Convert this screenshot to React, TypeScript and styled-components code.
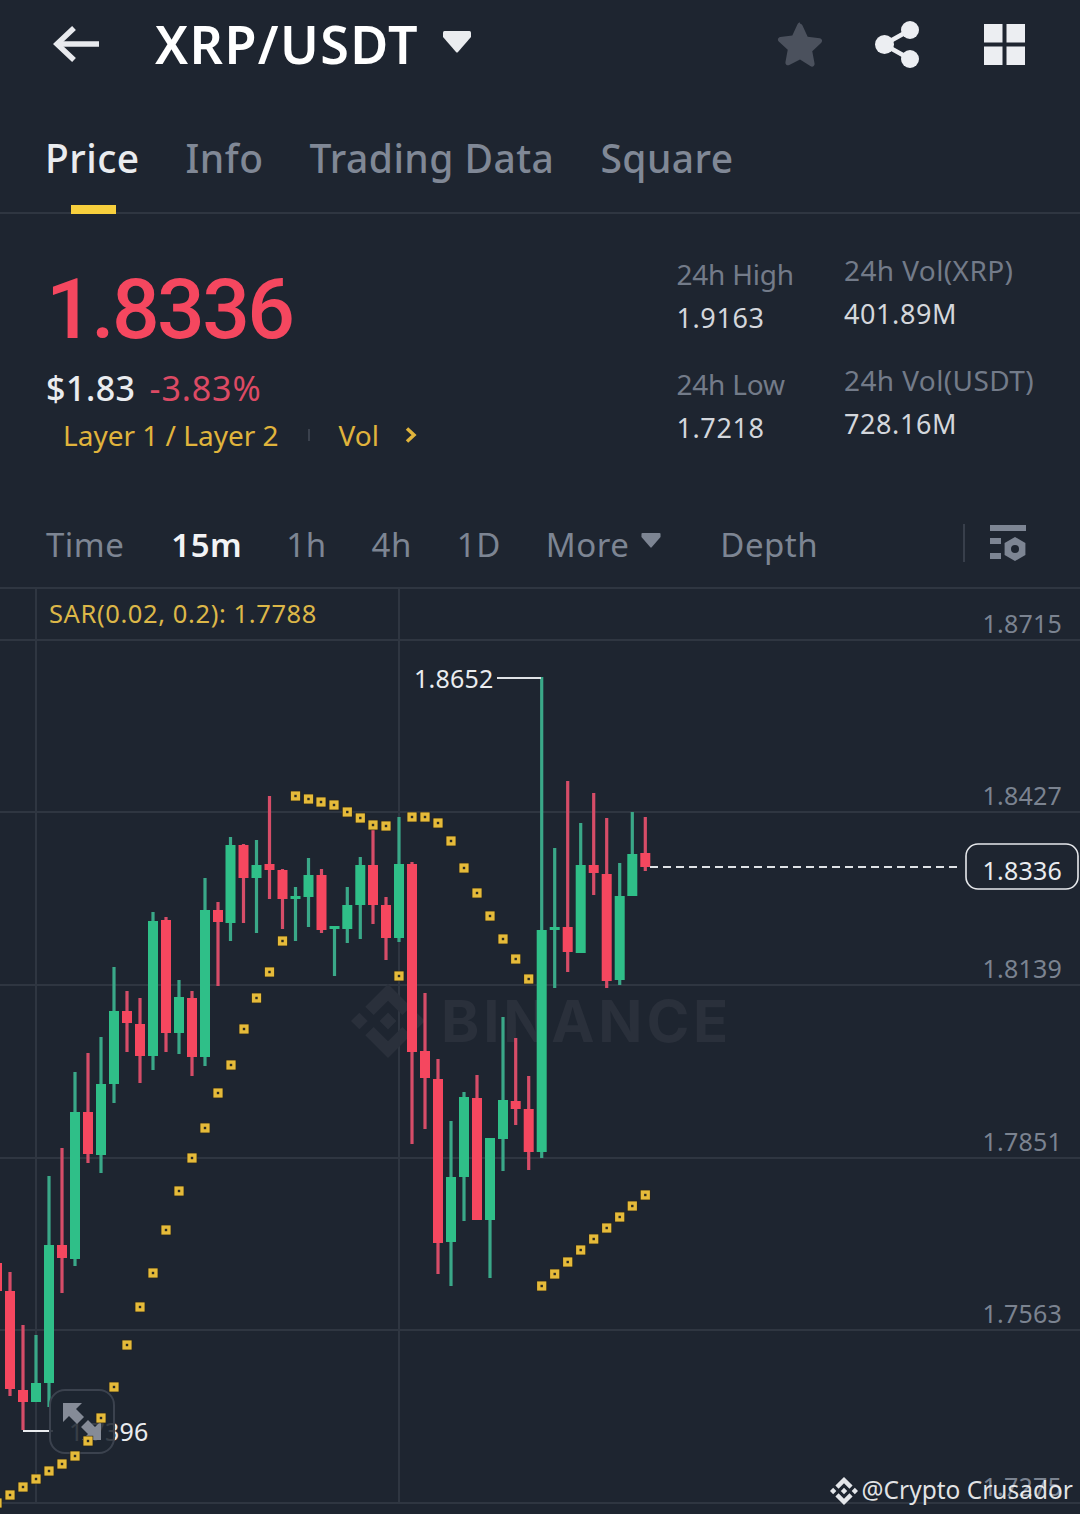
import styled, { createGlobalStyle } from "styled-components";

const GlobalStyle = createGlobalStyle`
    html, body {
        margin: 0;
        padding: 0;
        background: #1e2530;
    }
`;

const FONT = `"Noto Sans", "Open Sans", sans-serif`;
const GREEN = "#2fbf88";
const GREEN_WICK = "#3aa888";
const RED = "#f5475f";
const RED_WICK = "#d64d68";
const SAR_YELLOW = "#e6bb3a";
const GRID = "#2f3641";
const AXIS_TEXT = "#7b8390";

const Page = styled.div`
    position: relative;
    width: 1080px;
    height: 1514px;
    overflow: hidden;
    background: #1e2530;
    font-family: ${FONT};
    display: flex;
    flex-direction: column;
`;

const Header = styled.header`
    height: 88px;
    display: flex;
    align-items: center;
    padding: 0 53px;
    flex: none;
`;

const TitleButton = styled.div`
    display: flex;
    align-items: center;
    margin-left: 56px;
    color: #fff;
    font-size: 52px;
    font-weight: 600;
    line-height: 1;
    letter-spacing: 1.4px;
    svg {
        margin: -4px 0 0 24px;
    }
`;

const HeaderIcons = styled.div`
    display: flex;
    align-items: center;
    gap: 52px;
    margin-left: auto;
    margin-right: 2px;
    svg:last-child {
        margin-left: 13px;
    }
`;

const Tabs = styled.nav`
    flex: none;
    height: 124px;
    display: flex;
    gap: 46px;
    padding-left: 45px;
    border-bottom: 2px solid ${GRID};
`;

const Tab = styled.div<{ $active?: boolean }>`
    position: relative;
    padding-top: 43px;
    font-size: 39px;
    line-height: 54px;
    font-weight: 500;
    letter-spacing: 0.45px;
    color: ${(p) => (p.$active ? "#eaecef" : "#808896")};
    ${(p) =>
        p.$active &&
        `&::after {
            content: "";
            position: absolute;
            left: 26px;
            bottom: -2px;
            width: 45px;
            height: 9px;
            background: #f7cf3d;
        }`}
`;

const Stats = styled.section`
    flex: none;
    height: 284px;
    display: flex;
    justify-content: space-between;
    padding-right: 46px;
`;

const PriceBlock = styled.div`
    padding: 48px 0 0 46px;
`;

const BigPrice = styled.div`
    font-family: Roboto, ${FONT};
    font-size: 84px;
    font-weight: 500;
    line-height: 96px;
    letter-spacing: -2.6px;
    color: ${RED};
`;

const SubPrice = styled.div`
    display: flex;
    gap: 14px;
    margin-top: 8px;
    font-size: 34px;
    line-height: 44px;
    font-weight: 500;
    letter-spacing: 0.5px;
    color: #eaecef;
    span + span {
        font-weight: 400;
        letter-spacing: 0.9px;
        color: #dc4a64;
    }
`;

const TagRow = styled.div`
    display: flex;
    align-items: center;
    margin: 4px 0 0 17px;
    font-size: 28px;
    line-height: 42px;
    color: #e0b43c;
`;

const TagDivider = styled.i`
    width: 2px;
    height: 12px;
    margin: 0 29px;
    background: #3a414d;
`;

const TagChevron = styled.svg`
    margin-left: 26px;
`;

const StatColumns = styled.div`
    display: flex;
    gap: 50px;
`;

const StatColumn = styled.div<{ $top: number; $tracking: number }>`
    padding-top: ${(p) => p.$top}px;
    display: flex;
    flex-direction: column;
    gap: 24px;
    letter-spacing: ${(p) => p.$tracking}px;
`;

const StatItem = styled.div`
    font-size: 28px;
    line-height: 43px;
    color: #737b89;
    b {
        display: block;
        font-size: 27px;
        font-weight: 400;
        color: #d4d7dc;
        letter-spacing: 0.6px;
    }
`;

const Toolbar = styled.div`
    flex: none;
    height: 85px;
    display: flex;
    align-items: center;
    padding: 4px 54px 0 46px;
    border-bottom: 2px solid ${GRID};
`;

const Interval = styled.div<{ $active?: boolean; $left: number }>`
    margin-left: ${(p) => p.$left}px;
    font-size: 33px;
    line-height: 44px;
    letter-spacing: 0.5px;
    font-weight: ${(p) => (p.$active ? 600 : 400)};
    color: ${(p) => (p.$active ? "#f2f3f5" : "#7d8593")};
    display: flex;
    align-items: center;
    svg {
        margin: -8px 0 0 12px;
    }
`;

const ToolbarRight = styled.div`
    margin-left: auto;
    display: flex;
    align-items: center;
    margin-top: -4px;
`;

const ToolbarDivider = styled.i`
    width: 2px;
    height: 38px;
    margin-right: 25px;
    background: #383f4b;
`;

const Chart = styled.div`
    flex: 1;
    min-height: 0;
    svg {
        display: block;
    }
`;

const Credit = styled.div`
    position: absolute;
    right: 7px;
    bottom: 6px;
    display: flex;
    align-items: center;
    gap: 4px;
    font-size: 24.5px;
    line-height: 36px;
    color: rgba(255, 255, 255, 0.88);
    svg {
        margin-top: 1px;
    }
`;

// x center, wick top, wick bottom, body top, body bottom
type Candle = [number, number, number, number, number, "g" | "r"];

const candles: Candle[] = [
    [-3, 1255, 1300, 1263, 1291, "r"],
    [10, 1272, 1396, 1291, 1389, "r"],
    [23, 1325, 1430, 1390, 1402, "r"],
    [36, 1335, 1402, 1383, 1402, "g"],
    [49, 1176, 1407, 1245, 1383, "g"],
    [62, 1148, 1293, 1245, 1258, "r"],
    [75, 1072, 1266, 1112, 1259, "g"],
    [88, 1053, 1163, 1112, 1154, "r"],
    [101, 1037, 1173, 1084, 1155, "g"],
    [114, 967, 1103, 1011, 1084, "g"],
    [127, 991, 1052, 1011, 1023, "r"],
    [140, 998, 1083, 1024, 1056, "r"],
    [153, 912, 1070, 921, 1056, "g"],
    [166, 917, 1052, 920, 1033, "r"],
    [179, 980, 1054, 997, 1033, "g"],
    [192, 991, 1076, 998, 1057, "r"],
    [205, 878, 1066, 910, 1057, "g"],
    [218, 902, 986, 910, 922, "r"],
    [230.5, 837, 941, 845, 923, "g"],
    [243.5, 844, 923, 845, 878, "r"],
    [256.5, 840, 933, 865, 878, "g"],
    [269.5, 796, 899, 864, 870, "r"],
    [282.5, 869, 929, 870, 899, "r"],
    [295.5, 887, 941, 896, 899, "g"],
    [308.5, 858, 927, 875, 897, "g"],
    [321.5, 869, 933, 875, 930, "r"],
    [334.5, 926, 976, 926, 929, "g"],
    [347.3, 887, 943, 905, 929, "g"],
    [360.3, 857, 939, 865, 905, "g"],
    [373, 827, 924, 865, 905, "r"],
    [386, 897, 960, 905, 938, "r"],
    [399, 817, 942, 864, 938, "g"],
    [412, 862, 1144, 864, 1052, "r"],
    [425, 993, 1129, 1051, 1078, "r"],
    [438, 1059, 1274, 1079, 1243, "r"],
    [451, 1121, 1286, 1177, 1242, "g"],
    [464, 1092, 1221, 1097, 1177, "g"],
    [477, 1075, 1220, 1098, 1220, "r"],
    [490, 1138, 1278, 1138, 1220, "g"],
    [503, 1017, 1171, 1100, 1139, "g"],
    [515.7, 1038, 1125, 1101, 1109, "r"],
    [528.7, 1076, 1170, 1109, 1152, "r"],
    [541.7, 677, 1158, 930, 1152, "g"],
    [554.7, 848, 988, 927, 930, "g"],
    [567.7, 781, 972, 927, 952, "r"],
    [580.7, 823, 953, 865, 953, "g"],
    [593.7, 793, 895, 865, 873, "r"],
    [606.7, 818, 988, 874, 981, "r"],
    [619.7, 863, 985, 896, 980, "g"],
    [632.3, 812, 896, 854, 896, "g"],
    [645.3, 817, 871, 853, 867, "r"],
];

const sarDots: [number, number][] = [
    [-3, 1503], [10, 1495], [23, 1487], [36, 1479], [49, 1471], [62, 1464], [75, 1456],
    [88, 1441], [101, 1418], [114, 1387], [127, 1345], [140, 1307], [153, 1273], [166, 1230],
    [179, 1191], [192, 1158], [205, 1128], [218, 1093], [231, 1065], [244, 1029], [256.5, 998],
    [269.5, 972], [282.5, 941], [295.5, 796], [308.5, 799], [321, 802], [334, 805], [347.3, 812],
    [360.3, 818], [373, 825], [386, 826], [399, 976], [412, 817], [425, 817], [438, 823],
    [451, 841], [464, 868], [477, 893], [490, 916], [503, 939], [515.7, 959], [528.7, 979],
    [541.7, 1286], [554.7, 1274], [567.7, 1262], [580.7, 1250], [593.7, 1239], [606.7, 1228],
    [619.7, 1217], [632.3, 1206], [645.3, 1195],
];

const gridRows = [640, 812, 985, 1158, 1330, 1503];
const axisLabels: [string, number][] = [
    ["1.8715", 633], ["1.8427", 805], ["1.8139", 978], ["1.7851", 1151], ["1.7563", 1323], ["1.7275", 1496],
];

const BinanceMark = ({ fill, size, x, y }: { fill: string; size: number; x?: number; y?: number }) => (
    <svg x={x} y={y} width={size} height={size} viewBox="0 0 126.61 126.61" fill={fill}>
        <path d="M38.73 53.2l24.59-24.58 24.6 24.6 14.3-14.31L63.32 0 24.42 38.9l14.31 14.3z" />
        <path d="M0 63.31l14.3-14.31 14.31 14.31-14.31 14.3z" />
        <path d="M38.73 73.41l24.59 24.59 24.6-24.6 14.31 14.29-38.9 38.91-38.91-38.88-.02-.02 14.33-14.29z" />
        <path d="M98 63.31l14.3-14.31 14.31 14.3-14.31 14.32z" />
        <path d="M77.83 63.3L63.32 48.78 52.59 59.51l-1.24 1.23-2.54 2.54 14.51 14.5 14.51-14.47z" />
    </svg>
);

const Caret = ({ width, height, fill }: { width: number; height: number; fill: string }) => (
    <svg width={width} height={height} viewBox="0 0 28 22" fill={fill}>
        <path d="M0 1.5Q0 0 1.5 0H26.5Q28 0 28 1.5V6L15 21Q14 22 13 21L0 6Z" />
    </svg>
);

const CandleChart = () => (
    <svg width="1080" height="925" viewBox="0 589 1080 925" fontFamily={FONT}>
        {gridRows.map((y) => (
            <rect key={y} x="0" y={y - 1} width="1080" height="2" fill={GRID} />
        ))}
        <rect x="35" y="589" width="2" height="914" fill={GRID} />
        <rect x="398" y="589" width="2" height="914" fill={GRID} />

        <BinanceMark fill="#2a303b" size={74} x={351} y={984} />
        <text x="441" y="1042" fontSize="58" fontWeight="700" letterSpacing="3.8" fontFamily="Inter, sans-serif" fill="#2a303b">
            BINANCE
        </text>

        <text x="49" y="623" fontSize="25.5" letterSpacing="0.6" fill="#dcb748">SAR(0.02, 0.2): 1.7788</text>

        {axisLabels.map(([label, y]) => (
            <text key={label} x="1062" y={y} fontSize="25" letterSpacing="0.2" textAnchor="end" fill={AXIS_TEXT}>
                {label}
            </text>
        ))}

        {candles.map(([x, wickTop, wickBottom, bodyTop, bodyBottom, side]) => (
            <g key={x}>
                <rect x={x - 1.6} y={wickTop} width="3.2" height={wickBottom - wickTop} fill={side === "g" ? GREEN_WICK : RED_WICK} />
                <rect x={x - 5} y={bodyTop} width="10" height={bodyBottom - bodyTop} fill={side === "g" ? GREEN : RED} />
            </g>
        ))}

        <rect x="497" y="677" width="44" height="2" fill="#dfe2e6" />
        <text x="414" y="688" fontSize="25" letterSpacing="0.2" fill="#eaecef">1.8652</text>
        <rect x="23" y="1430" width="30" height="2" fill="#eaecef" />
        <text x="69" y="1441" fontSize="25" letterSpacing="0.2" fill="#eaecef">1.7396</text>

        <line x1="650" y1="867" x2="960" y2="867" stroke="#dfe2e6" strokeWidth="2" strokeDasharray="8 5" />
        <rect x="966" y="844" width="112" height="45" rx="12" fill="#1e2530" stroke="#e6e8eb" strokeWidth="1.6" />
        <text x="1062" y="880" fontSize="25" letterSpacing="0.2" textAnchor="end" fill="#eaecef">1.8336</text>

        {/* expand button sits over the chart */}
        <rect x="50" y="1390" width="64" height="63" rx="15" fill="#1e2530" fillOpacity="0.88" stroke="#3b424e" strokeWidth="2" />
        <path d="M63 1403H82L76 1409L84 1417L77 1424L69 1416L63 1422Z" fill="#858b97" />
        <path d="M101 1440H82L88 1434L81 1427L88 1420L95 1427L101 1421Z" fill="#858b97" />

        {sarDots.map(([x, y]) => (
            <g key={x}>
                <rect x={x - 5.2} y={y - 5.2} width="10.4" height="10.4" fill="#2a2518" />
                <rect x={x - 4.6} y={y - 4.6} width="9.2" height="9.2" fill={SAR_YELLOW} />
                <rect x={x - 1.2} y={y - 1.2} width="2.4" height="2.4" fill="#2a2a22" />
            </g>
        ))}
    </svg>
);

const App = () => {
    return (
        <Page>
            <GlobalStyle />
            <Header>
                <svg width="46" height="36" viewBox="0 0 46 36" fill="none" stroke="#e8eaee" strokeWidth="5.5">
                    <path d="M46 18H5" />
                    <path d="M21 2L4 18L21 34" />
                </svg>
                <TitleButton>
                    XRP/USDT
                    <Caret width={28} height={22} fill="#eaecef" />
                </TitleButton>
                <HeaderIcons>
                    <svg width="46" height="47" viewBox="0 0 24 24" fill="#4b515d">
                        <path d="M12 1.2c.6 0 1 .3 1.3 .9l2.7 5.9 6.3 .8c1.2 .2 1.6 1.5 .8 2.3l-4.7 4.4 1.2 6.4c.2 1.2-1 2-2 1.5L12 19.8l-5.6 2.9c-1 .5-2.2-.3-2-1.5l1.2-6.4-4.7-4.4c-.8-.8-.4-2.1 .8-2.3l6.3-.8 2.7-5.9c.3-.6 .7-.9 1.3-.9z" />
                    </svg>
                    <svg width="44" height="47" viewBox="0 0 44 47" fill="#eceef2" stroke="#eceef2">
                        <path d="M35 9L9 23.5L35 38" fill="none" strokeWidth="4.5" />
                        <circle cx="35" cy="9" r="9" stroke="none" />
                        <circle cx="9.5" cy="23.5" r="9.5" stroke="none" />
                        <circle cx="35" cy="38" r="9" stroke="none" />
                    </svg>
                    <svg width="41" height="41" viewBox="0 0 41 41" fill="#eceef2">
                        <rect width="18.5" height="18.5" />
                        <rect x="22.5" width="18.5" height="18.5" />
                        <rect y="22.5" width="18.5" height="18.5" />
                        <rect x="22.5" y="22.5" width="18.5" height="18.5" />
                    </svg>
                </HeaderIcons>
            </Header>

            <Tabs>
                <Tab $active>Price</Tab>
                <Tab>Info</Tab>
                <Tab>Trading Data</Tab>
                <Tab>Square</Tab>
            </Tabs>

            <Stats>
                <PriceBlock>
                    <BigPrice>1.8336</BigPrice>
                    <SubPrice>
                        <span>$1.83</span>
                        <span>-3.83%</span>
                    </SubPrice>
                    <TagRow>
                        Layer 1 / Layer 2
                        <TagDivider />
                        Vol
                        <TagChevron width="12" height="16" viewBox="0 0 12 16" fill="none" stroke="#e0b43c" strokeWidth="3.5">
                            <path d="M2 1.5L9 8L2 14.5" />
                        </TagChevron>
                    </TagRow>
                </PriceBlock>
                <StatColumns>
                    <StatColumn $top={39} $tracking={-0.2}>
                        <StatItem>24h High<b>1.9163</b></StatItem>
                        <StatItem>24h Low<b>1.7218</b></StatItem>
                    </StatColumn>
                    <StatColumn $top={35} $tracking={0.4}>
                        <StatItem>24h Vol(XRP)<b>401.89M</b></StatItem>
                        <StatItem>24h Vol(USDT)<b>728.16M</b></StatItem>
                    </StatColumn>
                </StatColumns>
            </Stats>

            <Toolbar>
                <Interval $left={0}>Time</Interval>
                <Interval $left={47} $active>15m</Interval>
                <Interval $left={44}>1h</Interval>
                <Interval $left={45}>4h</Interval>
                <Interval $left={45}>1D</Interval>
                <Interval $left={45}>
                    More
                    <Caret width={20} height={15} fill="#7d8593" />
                </Interval>
                <Interval $left={59}>Depth</Interval>
                <ToolbarRight>
                    <ToolbarDivider />
                    <svg width="36" height="36" viewBox="0 0 36 36" fill="#7d8593">
                        <rect width="36" height="6" />
                        <rect y="13" width="11" height="6" />
                        <rect y="28" width="11" height="6" />
                        <path fillRule="evenodd" d="M25 12L35.4 18V30L25 36L14.6 30V18ZM25 20a4 4 0 1 0 0 8a4 4 0 1 0 0-8Z" />
                    </svg>
                </ToolbarRight>
            </Toolbar>

            <Chart>
                <CandleChart />
            </Chart>

            <Credit>
                <BinanceMark fill="#e4e6ea" size={28} />
                @Crypto Crusador
            </Credit>
        </Page>
    );
};

export default App;
